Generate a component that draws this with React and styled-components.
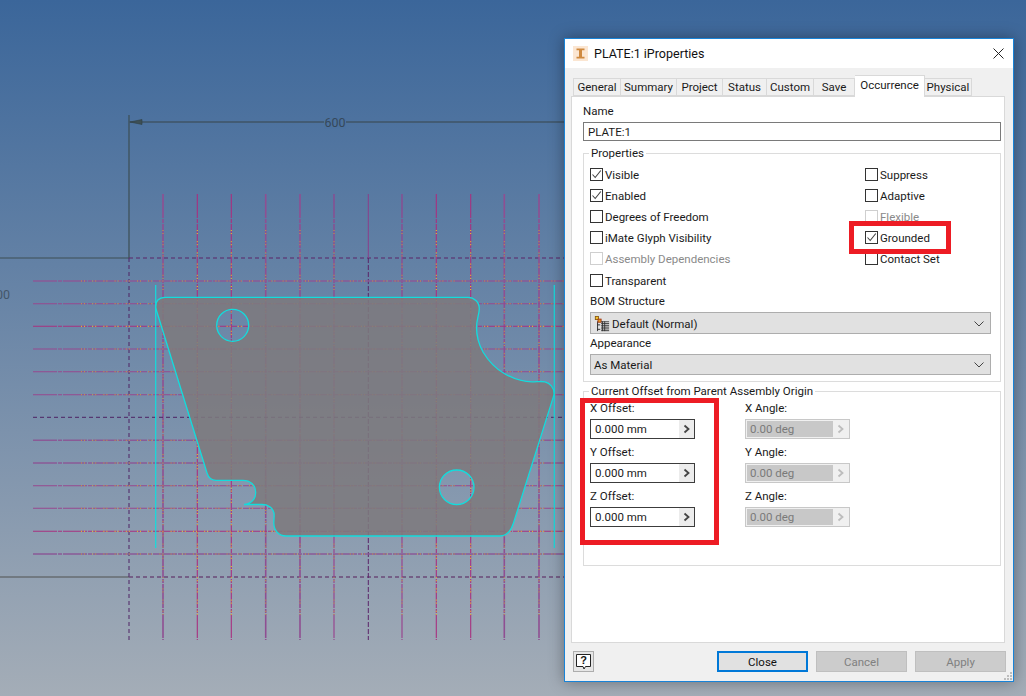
import React from 'react';
import styled, { createGlobalStyle } from 'styled-components';

const Global = createGlobalStyle`
  html, body { margin: 0; padding: 0; overflow: hidden; }
  body { font-family: Roboto, "Liberation Sans", sans-serif; }
  * { box-sizing: border-box; }
`;

const Desktop = styled.div`
  position: relative;
  width: 1026px;
  height: 696px;
  overflow: hidden;
  background: linear-gradient(180deg, #3b669a 0%, #a4adb7 100%);
`;
const Canvas = styled.svg`
  display: block;
  width: 1026px;
  height: 696px;
`;
const Dialog = styled.div`
  position: absolute;
  left: 564px;
  top: 38px;
  width: 450px;
  height: 644px;
  display: flex;
  flex-direction: column;
  background: #f0f0f0;
  border: 1px solid #1883d7;
  box-shadow: 0 0 14px rgba(0, 0, 0, 0.35);
  color: #1a1a1a;
  font-size: 11.5px;
  line-height: 14px;
`;
const TitleBar = styled.div`
  height: 29px;
  flex: none;
  display: flex;
  align-items: center;
  gap: 6px;
  padding: 0 9px 0 8px;
  background: #fff;
  font-size: 12.5px;
  color: #111;
`;
const TitleText = styled.span`
  flex: 1;
`;
const Tabs = styled.div`
  display: flex;
  align-items: flex-end;
  height: 28px;
  flex: none;
  padding-left: 8px;
`;
const Tab = styled.div`
  height: ${p => (p.$active ? '22px' : '18px')};
  width: ${p => p.$w}px;
  display: flex;
  align-items: ${p => (p.$active ? 'flex-start' : 'center')};
  justify-content: center;
  padding-top: ${p => (p.$active ? '2px' : '0')};
  background: ${p => (p.$active ? '#fff' : '#f0f0f0')};
  border: 1px solid #d9d9d9;
  border-bottom: ${p => (p.$active ? '0' : '1px solid #d9d9d9')};
  border-left-width: ${p => (p.$first ? '1px' : '0')};
  margin-bottom: ${p => (p.$active ? '-1px' : '0')};
  position: relative;
  z-index: ${p => (p.$active ? 1 : 0)};
`;
const Panel = styled.div`
  flex: none;
  margin: 0 8px 0 6px;
  width: 434px;
  height: 547px;
  background: #fff;
  border: 1px solid #d9d9d9;
  padding: 7px 3px 0 11px;
  display: flex;
  flex-direction: column;
`;
const FieldLabel = styled.div`
  color: #1a1a1a;
  height: 14px;
  white-space: nowrap;
`;
const NameInput = styled.div`
  height: 19px;
  margin-top: 4px;
  width: 418px;
  border: 1px solid #7a7a7a;
  padding: 2px 4px;
`;
const Group = styled.fieldset`
  margin: ${p => p.$mt}px 0 0;
  width: 418px;
  border: 1px solid #dcdcdc;
  padding: 0 9px 0 6px;
  height: ${p => p.$h}px;
  min-width: 0;
`;
const Legend = styled.legend`
  padding: 0 2px;
  margin-left: -1px;
  line-height: 14px;
  height: 14px;
`;
const PropsGrid = styled.div`
  display: grid;
  grid-template-columns: 275px 1fr;
  grid-template-rows: repeat(5, 21px) 23px;
  margin-top: 4px;
`;
const Check = styled.div`
  display: flex;
  align-items: center;
  gap: 2px;
  color: ${p => (p.$off ? '#8a8a8a' : '#1a1a1a')};
  white-space: nowrap;
`;
const Box = styled.span`
  width: 13px;
  height: 13px;
  flex: none;
  border: 1px solid ${p => (p.$off ? '#cfcfcf' : '#333')};
  background: #fff;
  display: flex;
`;
const Spacer = styled.div``;
const SelectLabel = styled(FieldLabel)`
  margin-top: ${p => p.$mt}px;
`;
const Select = styled.div`
  height: ${p => p.$h}px;
  width: 401px;
  margin-top: 4px;
  border: 1px solid #adadad;
  background: #e1e1e1;
  display: flex;
  align-items: center;
  gap: 2px;
  padding: 1px 5px 0 3px;
`;
const SelectText = styled.span`
  flex: 1;
`;
const OffsetGrid = styled.div`
  display: grid;
  grid-template-columns: 105px 105px;
  column-gap: 50px;
  row-gap: 4px;
  margin-top: 3px;
`;
const OffsetCell = styled.div`
  display: flex;
  flex-direction: column;
  gap: 4px;
  height: 40px;
`;
const Spin = styled.div`
  width: 105px;
  height: 20px;
  flex: none;
  display: flex;
  background: ${p => (p.$off ? '#f0f0f0' : '#fff')};
  border: 1px solid ${p => (p.$off ? '#c8c8c8' : '#3c3c3c')};
  ${p => (p.$off ? 'padding: 1px 0 1px 1px;' : '')}
`;
const SpinValue = styled.div`
  flex: 1;
  background: ${p => (p.$off ? '#c8c8c8' : '#fff')};
  color: ${p => (p.$off ? '#7a7a7a' : '#1a1a1a')};
  padding-left: ${p => (p.$off ? '3px' : '4px')};
  line-height: ${p => (p.$off ? '16px' : '18px')};
`;
const SpinButton = styled.div`
  width: ${p => (p.$off ? '16px' : '15px')};
  background: ${p => (p.$off ? '#f0f0f0' : '#ececec')};
  display: flex;
  align-items: center;
  justify-content: center;
`;
const Footer = styled.div`
  flex: 1;
  position: relative;
  display: flex;
  align-items: flex-start;
  padding: 8px 7px 0 8px;
`;
const HelpButton = styled.div`
  width: 21px;
  height: 21px;
  border: 1px solid #adadad;
  background: #e6e6e6;
  display: flex;
  align-items: center;
  justify-content: center;
  margin-right: auto;
`;
const Button = styled.div`
  width: 91px;
  height: 21px;
  margin-left: 8px;
  display: flex;
  align-items: center;
  justify-content: center;
  background: ${p => (p.$primary ? '#e1e1e1' : '#cccccc')};
  border: ${p => (p.$primary ? '2px solid #0078d7' : '1px solid #bfbfbf')};
  color: ${p => (p.$primary ? '#111' : '#808080')};
`;
const Grip = styled.svg`
  position: absolute;
  right: 0;
  bottom: 0;
  width: 10px;
  height: 10px;
`;
const Highlight = styled.div`
  position: absolute;
  left: ${p => p.$x}px;
  top: ${p => p.$y}px;
  width: ${p => p.$w}px;
  height: ${p => p.$h}px;
  border: 5px solid #ed1c24;
  pointer-events: none;
`;

const vLines = [
  [163, 2], [197.3, 1], [231.3, 1], [265.7, 2], [300, 2], [334, 1.5],
  [368.3, 0], [402, 1.5], [436.3, 1], [470.7, 1], [504.3, 2], [539, 2],
];
const hLines = [
  [281, 2], [303.7, 1.5], [326.3, 1], [349, 1.5], [371.7, 1.5], [394.7, 1.5],
  [417.3, 0], [440.3, 2], [463, 2], [485.7, 1.5], [508.3, 1.5], [531.3, 1], [554, 2],
];
const plate =
  'M155.7 308 C155 301 159 297.3 165 297.3 L468 297.3 C474 297.3 479.3 302 479.3 308.5 C479.3 314 476.5 320 476.5 327 ' +
  'C476.5 336 478 343 483 352 C489 362 496 369 505 374 C514 379 522 381.8 532 381.8 C537 381.8 541 381 545 381.8 ' +
  'C550 383 554.3 388 554.3 394 L513.5 523 C511 531 507 536 500 536 L286 536 C279 536 274 531 273.8 523 ' +
  'C273.8 519 274.5 516 274 513 C273 508 268 504.5 262 504.5 L244 504.5 C251 504 255.7 499 255.7 492.5 ' +
  'C255.7 485 250 480.3 243 480.3 L216 480.3 C211 480.3 208.5 478 207 473 Z';
const holes =
  ' M248.7 325.3 a16 16 0 1 0 -32 0 a16 16 0 1 0 32 0 Z M474 487.3 a17.3 17.3 0 1 0 -34.6 0 a17.3 17.3 0 1 0 34.6 0 Z';

function VGridLine({ x, w }) {
  if (w === 0) {
    return (
      <g>
        <line x1={x} y1={194} x2={x} y2={258} stroke="#8a3f8a" strokeWidth="1" />
        <line x1={x} y1={258} x2={x} y2={640} stroke="#5a2468" strokeWidth="1" strokeDasharray="5 2" />
      </g>
    );
  }
  const colour = w === 2 ? '#8f4f92' : w === 1.5 ? '#983f8c' : '#a8307f';
  const dots = w === 1 ? '#f0d020' : '#c8a040';
  return (
    <g>
      <line x1={x} y1={194} x2={x} y2={640} stroke={colour} strokeWidth={w === 2 ? 1.6 : 1.1} strokeDasharray="24 1 4 1" />
      <line x1={x} y1={230} x2={x} y2={620} stroke={dots} strokeWidth="1" strokeDasharray="1 2 1 7.2" />
    </g>
  );
}
function HGridLine({ y, w }) {
  if (w === 0) {
    return <line x1={33} y1={y} x2={565} y2={y} stroke="#4e2265" strokeWidth="1" strokeDasharray="4 3" />;
  }
  const colour = w === 2 ? '#8a5a96' : w === 1.5 ? '#96488f' : '#a8307f';
  const dots = w === 1 ? '#f0d020' : '#c8a040';
  return (
    <g>
      <line x1={33} y1={y} x2={565} y2={y} stroke={colour} strokeWidth={w === 2 ? 1.6 : 1.1} strokeDasharray="24 1 4 1" />
      <line x1={81} y1={y} x2={565} y2={y} stroke={dots} strokeWidth="1" strokeDasharray="1 2 1 7.2" />
    </g>
  );
}

function CadDrawing() {
  return (
    <Canvas viewBox="0 0 1026 696">
      <path d="M129 115V258M0 258H129" stroke="#3d4f55" strokeWidth="1.2" fill="none" />
      <path d="M129 122H565" stroke="#3f5566" strokeWidth="1.4" fill="none" />
      <path d="M130 122l12 -2.5v5Z" fill="#3d4f55" stroke="#2f3f45" strokeWidth="0.6" />
      <rect x="324" y="115" width="22" height="14" fill="#4c729f" />
      <text x="335" y="126.5" textAnchor="middle" fontFamily="Roboto, sans-serif" fontSize="12.5" fill="#36485a">600</text>
      <text x="-4" y="299" fontFamily="Roboto, sans-serif" fontSize="12.5" fill="#43566a">00</text>
      <path d="M0 577H129" stroke="#666c70" strokeWidth="1.3" />
      <path d="M129 258V640" stroke="#4e2265" strokeWidth="1" strokeDasharray="4 3" />
      <path d="M129 258H565" stroke="#5a2468" strokeWidth="1" strokeDasharray="4 3" />
      <path d="M129 577H565" stroke="#6b4a78" strokeWidth="1.3" strokeDasharray="4 3" />
      {vLines.map(([x, w]) => <VGridLine key={x} x={x} w={w} />)}
      {hLines.map(([y, w]) => <HGridLine key={y} y={y} w={w} />)}
      <path d={plate + holes} fill="#7d7a7d" fillOpacity="0.87" fillRule="evenodd" stroke="none" />
      <path d={plate + holes} fill="none" stroke="#13dcdc" strokeWidth="1.3" />
      <path d="M155.7 285V548M554.3 285V548" stroke="#13dcdc" strokeWidth="1.2" />
    </Canvas>
  );
}

const Tick = () => (
  <svg width="11" height="11" viewBox="0 0 11 11">
    <path d="M1.5 5.5L4.2 8.5L9.8 1.5" fill="none" stroke="#444" strokeWidth="1.1" />
  </svg>
);
const Chevron = () => (
  <svg width="12" height="12" viewBox="0 0 12 12">
    <path d="M1.5 3.5L6 8L10.5 3.5" fill="none" stroke="#444" strokeWidth="1" />
  </svg>
);
const SpinArrow = ({ off }) => (
  <svg width="8" height="10" viewBox="0 0 8 10">
    <path d="M1.5 1.5L5.5 5L1.5 8.5" fill="none" stroke={off ? '#bdbdbd' : '#444'} strokeWidth="1.8" />
  </svg>
);
const AppIcon = () => (
  <svg width="15" height="15" viewBox="0 0 15 15">
    <rect width="15" height="15" fill="#fbe6d2" />
    <path d="M3.5 2.5H11.5V4.2H9V10.8H11.5V12.5H3.5V10.8H6V4.2H3.5Z" fill="#cf8a40" />
  </svg>
);
const BomIcon = () => (
  <svg width="16" height="16" viewBox="0 0 18 18">
    <path d="M4 6V17M4 10H7M4 15H7" stroke="#222" fill="none" />
    <rect x="1.5" y="0.5" width="3.5" height="3.5" fill="#f2c230" stroke="#8a5a10" />
    <rect x="4.5" y="3.5" width="3.5" height="3.5" fill="#e9a020" stroke="#a03010" />
    <path d="M8 6.5H17M8 8.5H17M8 10.5H17M8 12.5H17M8 14.5H17M8 16.5H17M9.5 6V17M12 6V17" stroke="#333" fill="none" />
  </svg>
);
const HelpIcon = () => (
  <svg width="19" height="19" viewBox="0 0 19 19">
    <path d="M2.5 2.5H16.5V14.5H11.5L10 17L9 14.5H2.5Z" fill="#fff" stroke="#222" />
    <text x="9.5" y="12" textAnchor="middle" fontFamily="'Liberation Sans', sans-serif" fontWeight="700" fontSize="11" fill="#111">?</text>
  </svg>
);
const CloseIcon = () => (
  <svg width="11" height="11" viewBox="0 0 11 11">
    <path d="M0.5 0.5L10.5 10.5M10.5 0.5L0.5 10.5" stroke="#222" strokeWidth="1" />
  </svg>
);

const CheckItem = ({ label, on, off }) => (
  <Check $off={off}>
    <Box $off={off}>{on && <Tick />}</Box>
    {label}
  </Check>
);
const SpinField = ({ label, value, off }) => (
  <OffsetCell>
    <FieldLabel>{label}</FieldLabel>
    <Spin $off={off}>
      <SpinValue $off={off}>{value}</SpinValue>
      <SpinButton $off={off}><SpinArrow off={off} /></SpinButton>
    </Spin>
  </OffsetCell>
);

const tabs = [
  ['General', 48], ['Summary', 56], ['Project', 46], ['Status', 44], ['Custom', 47],
  ['Save', 41], ['Occurrence', 70], ['Physical', 47],
];

export default function App() {
  return (
    <Desktop>
      <Global />
      <CadDrawing />
      <Dialog>
        <TitleBar>
          <AppIcon />
          <TitleText>PLATE:1 iProperties</TitleText>
          <CloseIcon />
        </TitleBar>
        <Tabs>
          {tabs.map(([t, w], i) => (
            <Tab key={t} $w={w} $first={i === 0} $active={t === 'Occurrence'}>{t}</Tab>
          ))}
        </Tabs>
        <Panel>
          <FieldLabel>Name</FieldLabel>
          <NameInput>PLATE:1</NameInput>
          <Group $mt={5} $h={236}>
            <Legend>Properties</Legend>
            <PropsGrid>
              <CheckItem label="Visible" on />
              <CheckItem label="Suppress" />
              <CheckItem label="Enabled" on />
              <CheckItem label="Adaptive" />
              <CheckItem label="Degrees of Freedom" />
              <CheckItem label="Flexible" off />
              <CheckItem label="iMate Glyph Visibility" />
              <CheckItem label="Grounded" on />
              <CheckItem label="Assembly Dependencies" off />
              <CheckItem label="Contact Set" />
              <CheckItem label="Transparent" />
              <Spacer />
            </PropsGrid>
            <SelectLabel $mt={2}>BOM Structure</SelectLabel>
            <Select $h={22}>
              <BomIcon />
              <SelectText>Default (Normal)</SelectText>
              <Chevron />
            </Select>
            <SelectLabel $mt={2}>Appearance</SelectLabel>
            <Select $h={21}>
              <SelectText>As Material</SelectText>
              <Chevron />
            </Select>
          </Group>
          <Group $mt={2} $h={182}>
            <Legend>Current Offset from Parent Assembly Origin</Legend>
            <OffsetGrid>
              <SpinField label="X Offset:" value="0.000 mm" />
              <SpinField label="X Angle:" value="0.00 deg" off />
              <SpinField label="Y Offset:" value="0.000 mm" />
              <SpinField label="Y Angle:" value="0.00 deg" off />
              <SpinField label="Z Offset:" value="0.000 mm" />
              <SpinField label="Z Angle:" value="0.00 deg" off />
            </OffsetGrid>
          </Group>
        </Panel>
        <Footer>
          <HelpButton><HelpIcon /></HelpButton>
          <Button $primary>Close</Button>
          <Button>Cancel</Button>
          <Button>Apply</Button>
          <Grip viewBox="0 0 10 10">
            <path d="M7 1h2v2H7zM4 4h2v2H4zM7 4h2v2H7zM1 7h2v2H1zM4 7h2v2H4zM7 7h2v2H7z" fill="#bdbdbd" />
          </Grip>
        </Footer>
      </Dialog>
      <Highlight $x={849} $y={221} $w={102} $h={33} />
      <Highlight $x={580} $y={398} $w={139} $h={147} />
    </Desktop>
  );
}
